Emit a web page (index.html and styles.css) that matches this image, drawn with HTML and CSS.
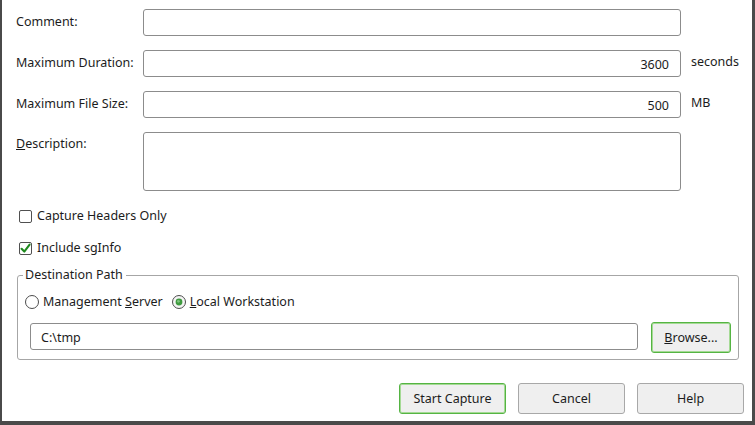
FILE: index.html
```html
<!DOCTYPE html>
<html>
<head>
<meta charset="utf-8">
<link rel="stylesheet" href="styles.css">
</head>
<body>
<div class="window">
  <div class="form">
    <label class="lbl">Comment:</label>
    <input class="field" type="text" value="">
    <span class="unit"></span>

    <label class="lbl">Maximum Duration:</label>
    <input class="field num" type="text" value="3600">
    <span class="unit">seconds</span>

    <label class="lbl">Maximum File Size:</label>
    <input class="field num" type="text" value="500">
    <span class="unit">MB</span>

    <label class="lbl top"><u>D</u>escription:</label>
    <textarea class="field area"></textarea>
    <span class="unit"></span>
  </div>

  <div class="checks">
    <div class="check">
      <span class="box"></span>
      <span>Capture Headers Only</span>
    </div>
    <div class="check">
      <span class="box">
        <svg width="11" height="11" viewBox="0 0 11 11"><path d="M1.6 5.8 L4.3 8.6 L9.6 1.6" fill="none" stroke="#1f8a1f" stroke-width="2.1" stroke-linecap="round" stroke-linejoin="round"/></svg>
      </span>
      <span>Include sgInfo</span>
    </div>
  </div>

  <fieldset class="group">
    <legend>Destination Path</legend>
    <div class="radios">
      <div class="radio">
        <svg width="14" height="14" viewBox="0 0 14 14"><circle cx="7" cy="7" r="6.5" fill="#fff" stroke="#4d4d4d"/></svg>
        <span>Management <u>S</u>erver</span>
      </div>
      <div class="radio">
        <svg width="14" height="14" viewBox="0 0 14 14"><circle cx="7" cy="7" r="6.5" fill="#f4f4f4" stroke="#4d4d4d"/><circle cx="7" cy="7" r="3.4" fill="#3f9a3f"/><circle cx="6.4" cy="6.3" r="1.4" fill="#7cc47c"/></svg>
        <span><u>L</u>ocal Workstation</span>
      </div>
    </div>
    <div class="pathrow">
      <input class="field path" type="text" value="C:\tmp">
      <button class="btn green browse"><u>B</u>rowse...</button>
    </div>
  </fieldset>

  <div class="buttons">
    <button class="btn green">Start Capture</button>
    <button class="btn">Cancel</button>
    <button class="btn">Help</button>
  </div>
</div>
</body>
</html>
```

FILE: styles.css
```css
* { box-sizing: border-box; }

html, body {
  margin: 0;
  padding: 0;
  background: #ffffff;
}

body {
  font-family: "Noto Sans", "Open Sans", sans-serif;
  font-size: 12.5px;
  color: #1c1c1c;
}

.window {
  width: 755px;
  height: 425px;
  border-left: 2px solid #4a4a4a;
  border-right: 3px solid #4a4a4a;
  border-bottom: 4px solid #4a4a4a;
  background: #ffffff;
  overflow: hidden;
}

.form {
  display: grid;
  grid-template-columns: 117px 538px auto;
  column-gap: 10px;
  row-gap: 14px;
  padding: 9px 0 0 14px;
  align-items: center;
}

.lbl {
  line-height: 16px;
  margin-top: -2px;
  white-space: nowrap;
}

.lbl.top {
  align-self: start;
  margin-top: 4px;
}

.unit {
  line-height: 16px;
  margin-top: -3px;
}

.field {
  font-family: inherit;
  font-size: 12.5px;
  color: #1c1c1c;
  height: 27px;
  border: 1px solid #8c8c8c;
  border-radius: 3px;
  background: #fff;
  padding: 0 10px;
  margin: 0;
  outline: none;
}

.num { text-align: right; padding-right: 11px; padding-top: 2px; }

.area {
  height: 59px;
  resize: none;
}

.checks {
  display: flex;
  flex-direction: column;
  gap: 16px;
  padding: 17px 0 0 17px;
}

.check {
  display: flex;
  align-items: center;
  gap: 5px;
  height: 16px;
  line-height: 16px;
}

.box {
  width: 13px;
  height: 13px;
  border: 1px solid #505050;
  border-radius: 2px;
  background: #fff;
  display: flex;
  align-items: center;
  justify-content: center;
}

.group {
  margin: 11px 0 0 15px;
  width: 722px;
  border: 1px solid #a6a6a6;
  border-radius: 3px;
  padding: 0 7px 6px 7px;
}

.group legend {
  padding: 0 3px 0 2px;
  margin-left: -2px;
  line-height: 16px;
}

.radios {
  display: flex;
  gap: 9px;
  margin-top: 11px;
  height: 16px;
}

.radio {
  display: flex;
  align-items: center;
  gap: 4px;
  line-height: 16px;
}

.pathrow {
  display: flex;
  align-items: flex-start;
  gap: 13px;
  margin-top: 12px;
  padding-left: 5px;
}

.path {
  width: 608px;
  margin-top: 1px;
  padding-left: 10px;
  padding-top: 1px;
}

.btn {
  font-family: inherit;
  font-size: 12.5px;
  color: #1c1c1c;
  height: 31px;
  background: #efefef;
  border: 1px solid #a8a8a8;
  border-radius: 3px;
  padding: 0;
  margin: 0;
}

.btn.green {
  border-color: #55b443;
  box-shadow: inset 0 0 0 1px #a5da95;
}

.browse {
  width: 80px;
}

.buttons {
  display: flex;
  justify-content: flex-end;
  gap: 12px;
  margin-top: 23px;
  padding-right: 8px;
}

.buttons .btn {
  width: 107px;
}
```
